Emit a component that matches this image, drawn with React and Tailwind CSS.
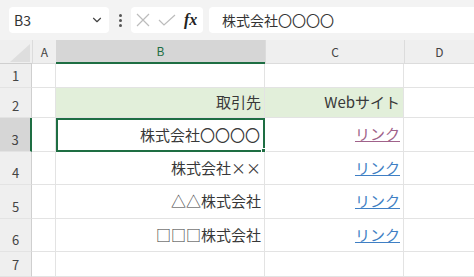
import { ChevronDown } from "lucide-react";

const font = { fontFamily: '"Noto Sans CJK JP", "Noto Sans", sans-serif' };

const rows = [
  { n: 1, h: "h-[24px]", b: "", c: "" },
  { n: 2, h: "h-[30px]", b: "取引先", c: "Webサイト", fill: true },
  { n: 3, h: "h-[34px]", b: "株式会社〇〇〇〇", c: "リンク", link: "visited", selected: true },
  { n: 4, h: "h-[33px]", b: "株式会社××", c: "リンク", link: "normal" },
  { n: 5, h: "h-[34px]", b: "△△株式会社", c: "リンク", link: "normal" },
  { n: 6, h: "h-[33px]", b: "□□□株式会社", c: "リンク", link: "normal" },
  { n: 7, h: "h-[25px]", b: "", c: "" },
];

function FormulaBar() {
  return (
    <div className="flex items-center h-[40px] bg-[#f3f3f3] pl-[9px]">
      <div className="flex items-center justify-between w-[100px] h-[26px] bg-white rounded-[4px] px-[5px]">
        <span className="text-[14px] text-[#333]" style={font}>B3</span>
        <ChevronDown size={14} strokeWidth={2} className="text-[#444]" />
      </div>
      <div className="flex flex-col gap-[2px] w-[22px] items-center">
        <span className="w-[3px] h-[3px] bg-[#555] rounded-full" />
        <span className="w-[3px] h-[3px] bg-[#555] rounded-full" />
        <span className="w-[3px] h-[3px] bg-[#555] rounded-full" />
      </div>
      <div className="flex items-center w-[72px] h-[26px] bg-white rounded-[4px] pl-[5px]">
        <svg width="14" height="14" viewBox="0 0 14 14" className="text-[#bcbcbc]">
          <path d="M1 1 L13 13 M13 1 L1 13" stroke="currentColor" strokeWidth="1.2" fill="none" />
        </svg>
        <svg width="18" height="12" viewBox="0 0 18 12" className="ml-[8px] text-[#bcbcbc]">
          <path d="M1 6 L6 11 L17 1" stroke="currentColor" strokeWidth="1.2" fill="none" />
        </svg>
        <span className="ml-[8px] text-[16px] italic text-[#222] font-bold" style={{ fontFamily: '"Liberation Serif", serif' }}>
          fx
        </span>
      </div>
      <div className="flex-1 flex items-center h-[26px] ml-[6px] bg-white rounded-l-[4px] pl-[13px]">
        <span className="text-[14px] text-[#333]" style={font}>株式会社〇〇〇〇</span>
      </div>
    </div>
  );
}

export default function App() {
  return (
    <div className="w-[474px] h-[277px] overflow-hidden bg-white" style={font}>
      <FormulaBar />
      <div className="grid grid-cols-[32px_24px_209px_139px_70px]">
        {/* column headers */}
        <div className="h-[24px] bg-[#efefef] border-b border-[#cfcfcf] relative overflow-hidden">
          <div className="absolute right-[2px] bottom-[1px] w-0 h-0 border-l-[20px] border-l-transparent border-b-[18px] border-b-[#dedede]" />
        </div>
        <div className="h-[24px] bg-[#efefef] border-b border-[#cfcfcf] border-l border-[#dcdcdc] flex items-center justify-center text-[12px] text-[#444]">A</div>
        <div className="h-[24px] bg-[#d6d6d6] border-b-2 border-[#1e6e43] flex items-center justify-center text-[12px] text-[#1e6e43]">B</div>
        <div className="h-[24px] bg-[#efefef] border-b border-[#cfcfcf] border-l border-[#dcdcdc] flex items-center justify-center text-[12px] text-[#444]">C</div>
        <div className="h-[24px] bg-[#efefef] border-b border-[#cfcfcf] border-l border-[#dcdcdc] flex items-center justify-center text-[12px] text-[#444]">D</div>

        {rows.map((r) => (
          <div key={r.n} className="contents">
            <div
              className={`${r.h} flex items-end justify-center pb-[2px] text-[13px] border-b border-[#e3e3e3] ${
                r.selected ? "bg-[#d6d6d6] border-r-2 border-r-[#1e6e43] text-[#444]" : "bg-[#efefef] border-r border-r-[#cfcfcf] text-[#444]"
              }`}
            >
              {r.n}
            </div>
            <div className={`${r.h} border-b border-r border-[#e3e3e3]`} />
            <div
              className={`${r.h} relative flex items-center justify-end pr-[3px] text-[15px] text-[#383838] ${
                r.fill ? "bg-[#e2efda]" : ""
              } ${r.selected ? "border-2 border-[#1e6e43]" : "border-b border-r border-[#e3e3e3]"}`}
            >
              {r.b}
              {r.selected && (
                <span className="absolute -right-[3px] -bottom-[3px] w-[5px] h-[5px] bg-[#1e6e43] border border-white" />
              )}
            </div>
            <div
              className={`${r.h} flex items-center justify-end pr-[3px] text-[15px] border-b border-r border-[#e3e3e3] ${
                r.fill ? "bg-[#e2efda] text-[#383838]" : ""
              } ${r.link === "visited" ? "text-[#a0628a] underline" : ""} ${
                r.link === "normal" ? "text-[#3f7fc4] underline" : ""
              }`}
            >
              {r.c}
            </div>
            <div className={`${r.h} border-b border-[#e3e3e3]`} />
          </div>
        ))}
      </div>
    </div>
  );
}
